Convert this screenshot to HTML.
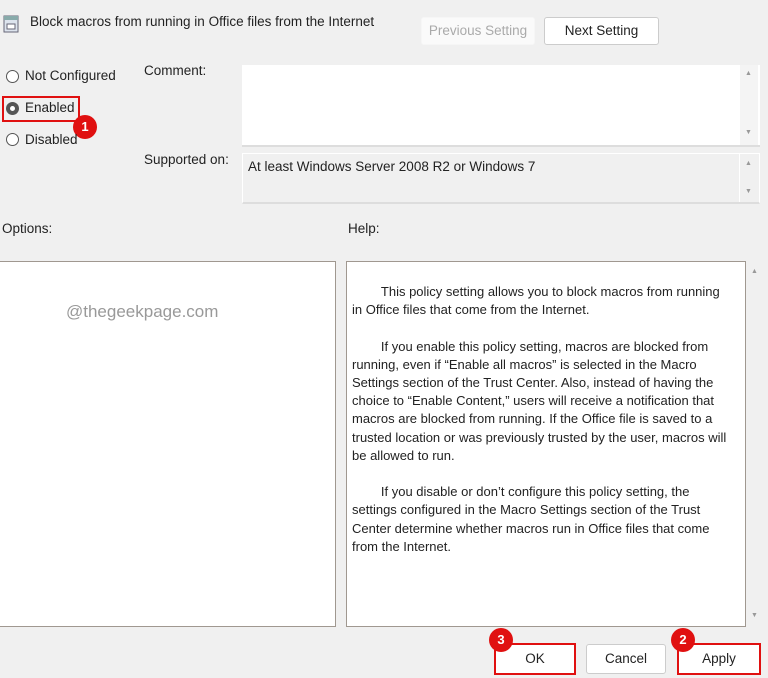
<!DOCTYPE html>
<html><head><style>
body{margin:0;width:768px;height:678px;background:#f0f0f0;font-family:"Liberation Sans",sans-serif;font-size:13px;color:#222;position:relative;overflow:hidden}
.a{position:absolute}
.btn{position:absolute;background:#fff;border:1px solid #ccc;border-radius:3px;text-align:center;line-height:26px;font-size:13.5px}
.rad{position:absolute;width:11px;height:11px;border:1px solid #555;border-radius:50%;background:#fff}
.badge{position:absolute;width:24px;height:24px;border-radius:50%;background:#e01010;color:#fff;font-weight:bold;font-size:13px;text-align:center;line-height:24px}
.red{position:absolute;border:2px solid #e01010}
.arr{position:absolute;font-size:7px;color:#999}
</style></head><body>
<svg class="a" style="left:3px;top:15px" width="16" height="18" viewBox="0 0 16 18"><rect x="1" y="1" width="14" height="16" fill="#dde4ee" stroke="#667"/><rect x="1" y="1" width="14" height="4" fill="#8aa"/><rect x="4" y="9" width="8" height="5" fill="#fff" stroke="#667"/></svg>
<div class="a" style="left:30px;top:14px;font-size:13.5px">Block macros from running in Office files from the Internet</div>
<div class="btn" style="left:421px;top:17px;width:112px;height:26px;color:#aaa;border-color:#f6f6f6;background:#fafafa">Previous Setting</div>
<div class="btn" style="left:544px;top:17px;width:113px;height:26px;color:#222">Next Setting</div>

<div class="rad" style="left:6px;top:70px"></div><div class="a" style="left:25px;top:68px;font-size:13.5px">Not Configured</div>
<div class="rad" style="left:6px;top:102px;border:4px solid #555;width:5px;height:5px"></div><div class="a" style="left:25px;top:100px;font-size:13.5px">Enabled</div>
<div class="red" style="left:2px;top:96px;width:74px;height:22px"></div>
<div class="badge" style="left:73px;top:115px">1</div>
<div class="rad" style="left:6px;top:133px"></div><div class="a" style="left:25px;top:132px;font-size:13.5px">Disabled</div>

<div class="a" style="left:144px;top:63px;font-size:13.5px">Comment:</div>
<div class="a" style="left:242px;top:65px;width:518px;height:80px;background:#fff;border-bottom:2px solid #ddd"></div>
<div class="a" style="left:740px;top:65px;width:18px;height:80px;background:#f4f4f4"></div>
<div class="arr" style="left:745px;top:70px">▲</div><div class="arr" style="left:745px;top:129px">▼</div>
<div class="a" style="left:144px;top:152px;font-size:13.5px">Supported on:</div>
<div class="a" style="left:242px;top:153px;width:516px;height:48px;background:#f0f0f0;border:1px solid #fff;border-bottom:2px solid #ddd"></div>
<div class="a" style="left:739px;top:154px;width:1px;height:48px;background:#fff"></div>
<div class="a" style="left:248px;top:159px;font-size:13.5px">At least Windows Server 2008 R2 or Windows 7</div>
<div class="arr" style="left:745px;top:160px">▲</div><div class="arr" style="left:745px;top:188px">▼</div>

<div class="a" style="left:2px;top:221px;font-size:13.5px">Options:</div>
<div class="a" style="left:348px;top:221px;font-size:13.5px">Help:</div>
<div class="a" style="left:0;top:261px;width:335px;height:364px;background:#fff;border:1px solid #a09890;border-left:none"></div>
<div class="a" style="left:66px;top:302px;font-size:17px;color:#999">@thegeekpage.com</div>
<div class="a" style="left:346px;top:261px;width:398px;height:364px;background:#fff;border:1px solid #a09890"></div>
<div class="arr" style="left:751px;top:268px">▲</div><div class="arr" style="left:751px;top:612px">▼</div>
<div class="a" style="left:352px;top:283px;line-height:18.2px;font-size:13px;color:#222">&nbsp;&nbsp;&nbsp;&nbsp;&nbsp;&nbsp;&nbsp;&nbsp;This policy setting allows you to block macros from running<br>in Office files that come from the Internet.<br><br>&nbsp;&nbsp;&nbsp;&nbsp;&nbsp;&nbsp;&nbsp;&nbsp;If you enable this policy setting, macros are blocked from<br>running, even if “Enable all macros” is selected in the Macro<br>Settings section of the Trust Center. Also, instead of having the<br>choice to “Enable Content,” users will receive a notification that<br>macros are blocked from running. If the Office file is saved to a<br>trusted location or was previously trusted by the user, macros will<br>be allowed to run.<br><br>&nbsp;&nbsp;&nbsp;&nbsp;&nbsp;&nbsp;&nbsp;&nbsp;If you disable or don’t configure this policy setting, the<br>settings configured in the Macro Settings section of the Trust<br>Center determine whether macros run in Office files that come<br>from the Internet.</div>

<div class="btn" style="left:494px;top:643px;width:78px;height:28px;line-height:28px;border:2px solid #e01010;border-radius:0">OK</div>
<div class="btn" style="left:586px;top:644px;width:78px;height:28px;line-height:28px">Cancel</div>
<div class="btn" style="left:677px;top:643px;width:80px;height:28px;line-height:28px;border:2px solid #e01010;border-radius:0">Apply</div>
<div class="badge" style="left:489px;top:628px">3</div>
<div class="badge" style="left:671px;top:628px">2</div>
</body></html>
